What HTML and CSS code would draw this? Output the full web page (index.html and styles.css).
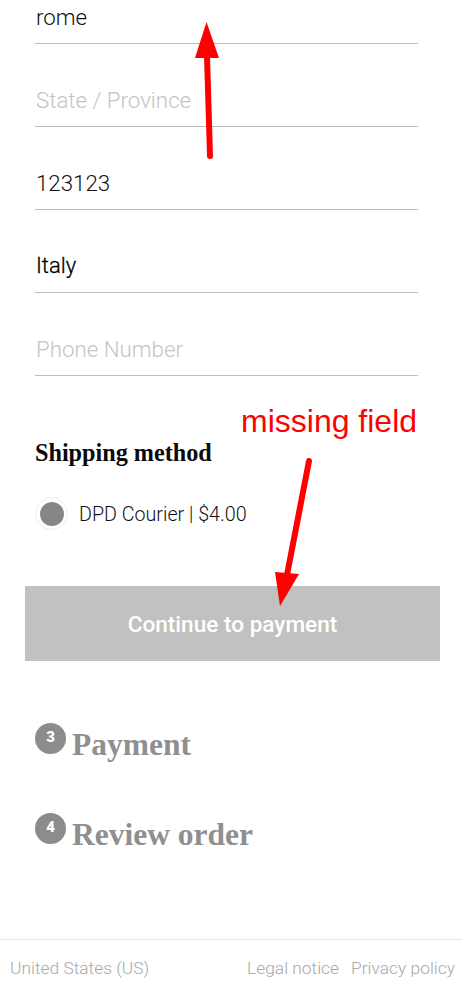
FILE: index.html
```html
<!DOCTYPE html>
<html lang="en">
<head>
<meta charset="utf-8">
<title>Checkout</title>
<link rel="stylesheet" href="styles.css">
</head>
<body>
<main class="page">
  <form class="form">
    <div class="field first"><span class="value">rome</span></div>
    <div class="field"><span class="placeholder">State / Province</span></div>
    <div class="field"><span class="value">123123</span></div>
    <div class="field"><span class="value strong">Italy</span></div>
    <div class="field"><span class="placeholder">Phone Number</span></div>
  </form>
  <h3 class="shipping-title">Shipping method</h3>
  <div class="shipping-option">
    <span class="radio"><span class="radio-dot"></span></span>
    <span class="shipping-label">DPD Courier | $4.00</span>
  </div>
  <div class="button">Continue to payment</div>
  <div class="step step-payment"><span class="step-num">3</span><h2 class="step-title">Payment</h2></div>
  <div class="step step-review"><span class="step-num">4</span><h2 class="step-title">Review order</h2></div>
  <footer class="footer">
    <span>United States (US)</span>
    <span class="footer-links"><span>Legal notice</span><span>Privacy policy</span></span>
  </footer>
</main>
<svg class="annotation" width="462" height="988" viewBox="0 0 462 988" aria-hidden="true">
  <path class="arrow-line" d="M210 156 L207 56"/>
  <polygon class="arrow-head" points="206.500,22 219,58 195,58"/>
  <path class="arrow-line" d="M309 461 L287 575"/>
  <polygon class="arrow-head" points="280,606 275,572 299,574"/>
</svg>
<div class="note">missing field</div>
</body>
</html>
```
FILE: styles.css
```css
* { box-sizing: border-box; }
html, body { margin: 0; padding: 0; }
body {
  width: 462px;
  height: 988px;
  overflow: hidden;
  background: #fff;
  position: relative;
  font-family: Roboto, "Liberation Sans", sans-serif;
  color: #000;
}
.page { display: flex; flex-direction: column; height: 988px; }
.form { display: flex; flex-direction: column; margin: 0 44px 0 35px; }
.field {
  height: 83px;
  display: flex;
  align-items: flex-end;
  padding: 0 0 13px 1px;
  border-bottom: 1px solid #bdbdbd;
  font-size: 22.3px;
  line-height: 26px;
  font-weight: 300;
}
.field.first { height: 44px; }
.value { color: #111; }
.value.strong { font-size: 22px; font-weight: 300; color: #000; -webkit-text-stroke: 0.3px #000; }
.placeholder { color: #c4c4c4; }
.shipping-title {
  margin: 61px 0 0 35px;
  font-family: "Liberation Serif", serif;
  font-weight: 700;
  font-size: 24.2px;
  line-height: 32px;
  color: #0a0a0a;
}
.shipping-option { display: flex; align-items: center; margin: 28px 0 0 35px; }
.radio {
  width: 33px;
  height: 33px;
  border-radius: 50%;
  border: 1px solid #eee;
  display: flex;
  align-items: center;
  justify-content: center;
}
.radio-dot { width: 24px; height: 24px; border-radius: 50%; background: #868686; }
.shipping-label { margin-left: 11px; padding-top: 2px; font-size: 19.7px; line-height: 26px; font-weight: 300; color: #111; }
.button {
  margin: 56px 22px 0 25px;
  height: 75px;
  background: #c1c1c1;
  color: #fff;
  display: flex;
  align-items: center;
  justify-content: center;
  padding-top: 1px;
  font-size: 22.6px;
  font-weight: 500;
}
.step { display: flex; align-items: flex-start; margin-left: 35px; }
.step-payment { margin-top: 62px; }
.step-review { margin-top: 52px; }
.step-num {
  width: 31px;
  height: 31px;
  border-radius: 50%;
  background: #8c8c8c;
  color: #fff;
  font-size: 15px;
  font-weight: 900;
  display: flex;
  align-items: center;
  justify-content: center;
  padding-bottom: 3px;
}
.step-title {
  margin: 6px 0 0 6px;
  font-family: "Liberation Serif", serif;
  font-weight: 700;
  font-size: 31.5px;
  line-height: 32px;
  color: #8f8f8f;
}
.footer {
  margin-top: auto;
  height: 49px;
  border-top: 1px solid #e6e6e6;
  display: flex;
  justify-content: space-between;
  padding: 17px 7px 0 10px;
  font-size: 17.4px;
  line-height: 22px;
  font-weight: 300;
  color: #a8a8a8;
}
.footer-links { display: flex; gap: 12px; }
.annotation { position: absolute; left: 0; top: 0; pointer-events: none; }
.arrow-line { fill: none; stroke: #fe0000; stroke-width: 6; stroke-linecap: round; }
.arrow-head { fill: #fe0000; }
.note {
  position: absolute;
  left: 241px;
  top: 403px;
  font-family: "Liberation Sans", sans-serif;
  font-size: 32px;
  line-height: 36px;
  color: #fe0000;
}
```
